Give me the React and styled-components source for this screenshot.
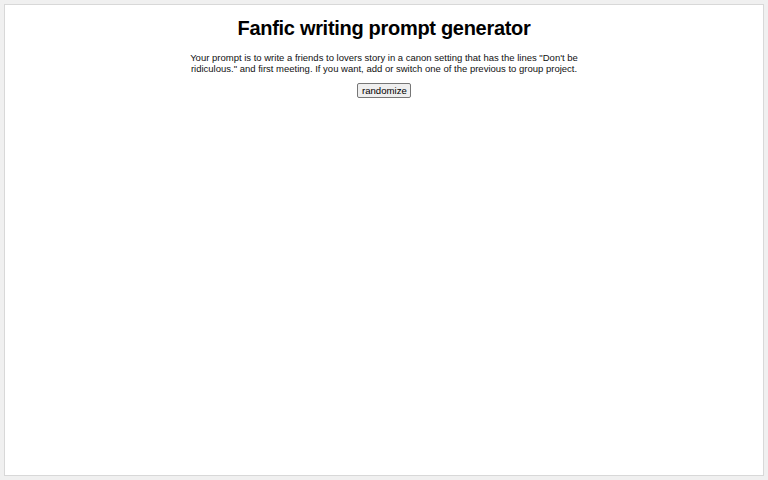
import React, { useState } from "react";
import styled, { createGlobalStyle } from "styled-components";

const Global = createGlobalStyle`
  html, body { margin: 0; padding: 0; }
  body {
    background: #f0f0f0;
    font-family: "Liberation Sans", Arial, sans-serif;
    color: #000;
  }
`;

const Page = styled.div`
  padding: 4px;
  height: 480px;
  box-sizing: border-box;
`;

const Card = styled.main`
  background: #fff;
  border: 1px solid #d8d8d8;
  height: 100%;
  box-sizing: border-box;
  display: flex;
  flex-direction: column;
  align-items: center;
  padding-top: 11px;
`;

const Title = styled.h1`
  margin: 0;
  font-size: 20px;
  letter-spacing: -0.3px;
  font-weight: bold;
  line-height: 24px;
`;

const Prompt = styled.p`
  margin: 12px 0 0;
  font-size: 9.5px;
  line-height: 11px;
  text-align: center;
  width: 390px;
  color: #111;
`;

const Button = styled.button`
  margin-top: 9px;
  font-family: "Liberation Sans", Arial, sans-serif;
  font-size: 9.6px;
  padding: 0 4px;
  height: 15px;
  width: 54px;
  background: #efefef;
  border: 1px solid #767676;
  border-radius: 2px;
  color: #000;
`;

export default function App() {
  const [text] = useState(
    "Your prompt is to write a friends to lovers story in a canon setting that has the lines \"Don't be ridiculous.\" and first meeting. If you want, add or switch one of the previous to group project."
  );
  return (
    <>
      <Global />
      <Page>
        <Card>
          <Title>Fanfic writing prompt generator</Title>
          <Prompt>{text}</Prompt>
          <Button>randomize</Button>
        </Card>
      </Page>
    </>
  );
}
